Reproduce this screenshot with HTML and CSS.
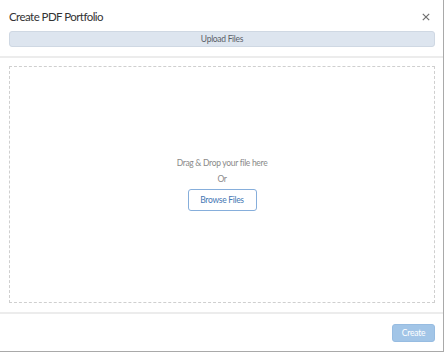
FILE: index.html
```html
<!DOCTYPE html>
<html>
<head>
<meta charset="utf-8">
<link rel="stylesheet" href="styles.css">
</head>
<body>
<div class="dialog">
  <div class="header">
    <div class="title-row">
      <span class="title">Create PDF Portfolio</span>
      <svg class="close" width="8" height="8" viewBox="0 0 8 8"><path d="M0.8 0.8L7.2 7.2M7.2 0.8L0.8 7.2" stroke="#707070" stroke-width="1.2" fill="none"/></svg>
    </div>
    <div class="tab">Upload Files</div>
  </div>
  <div class="body">
    <div class="drop">
      <div class="drop-text">Drag &amp; Drop your file here</div>
      <div class="drop-or">Or</div>
      <button class="browse">Browse Files</button>
    </div>
  </div>
  <div class="footer">
    <button class="create">Create</button>
  </div>
</div>
</body>
</html>
```

FILE: styles.css
```css
html, body {
  margin: 0;
  padding: 0;
  background: #ffffff;
}
body {
  font-family: Lato, "Open Sans", sans-serif;
}
.dialog {
  width: 443px;
  height: 351px;
  background: #ffffff;
  border-right: 1px solid #a9a9a9;
  border-bottom: 1px solid #a9a9a9;
  display: flex;
  flex-direction: column;
}
.header {
  padding: 9px 8px 9px 9px;
  border-bottom: 2px solid #ececec;
  display: flex;
  flex-direction: column;
  gap: 6px;
}
.title-row {
  height: 16px;
  display: flex;
  align-items: center;
  justify-content: space-between;
}
.title {
  font-size: 11.5px;
  letter-spacing: -0.55px;
  color: #333333;
  line-height: 16px;
}
.close {
  margin-right: 5px;
}
.tab {
  height: 14px;
  background: #dde5ef;
  border: 1px solid #cfd8e3;
  border-radius: 3px;
  font-size: 8.5px;
  letter-spacing: -0.3px;
  color: #5a6068;
  display: flex;
  align-items: center;
  justify-content: center;
}
.body {
  padding: 8px 8px 9px 9px;
  border-bottom: 2px solid #ececec;
}
.drop {
  height: 235px;
  border: 1px dashed #cfcfcf;
  display: flex;
  flex-direction: column;
  align-items: center;
}
.drop-text {
  margin-top: 90px;
  font-size: 8.5px;
  letter-spacing: -0.3px;
  color: #8a8a8a;
  line-height: 12px;
}
.drop-or {
  margin-top: 4px;
  font-size: 8.5px;
  letter-spacing: -0.3px;
  color: #8a8a8a;
  line-height: 12px;
}
.browse {
  margin-top: 4px;
  width: 69px;
  height: 22px;
  background: #ffffff;
  border: 1px solid #86aedb;
  border-radius: 3px;
  font-family: Lato, "Open Sans", sans-serif;
  font-size: 8.5px;
  letter-spacing: -0.3px;
  color: #4577b4;
  padding: 0;
}
.footer {
  flex: 1;
  padding: 10px 8px 9px 9px;
  display: flex;
  justify-content: flex-end;
  align-items: flex-start;
}
.create {
  width: 43px;
  height: 18px;
  background: #a2c5e7;
  border: 1px solid #97bce1;
  border-radius: 3px;
  color: #ffffff;
  font-family: Lato, "Open Sans", sans-serif;
  font-size: 8.5px;
  letter-spacing: -0.2px;
  padding: 0;
}
```
